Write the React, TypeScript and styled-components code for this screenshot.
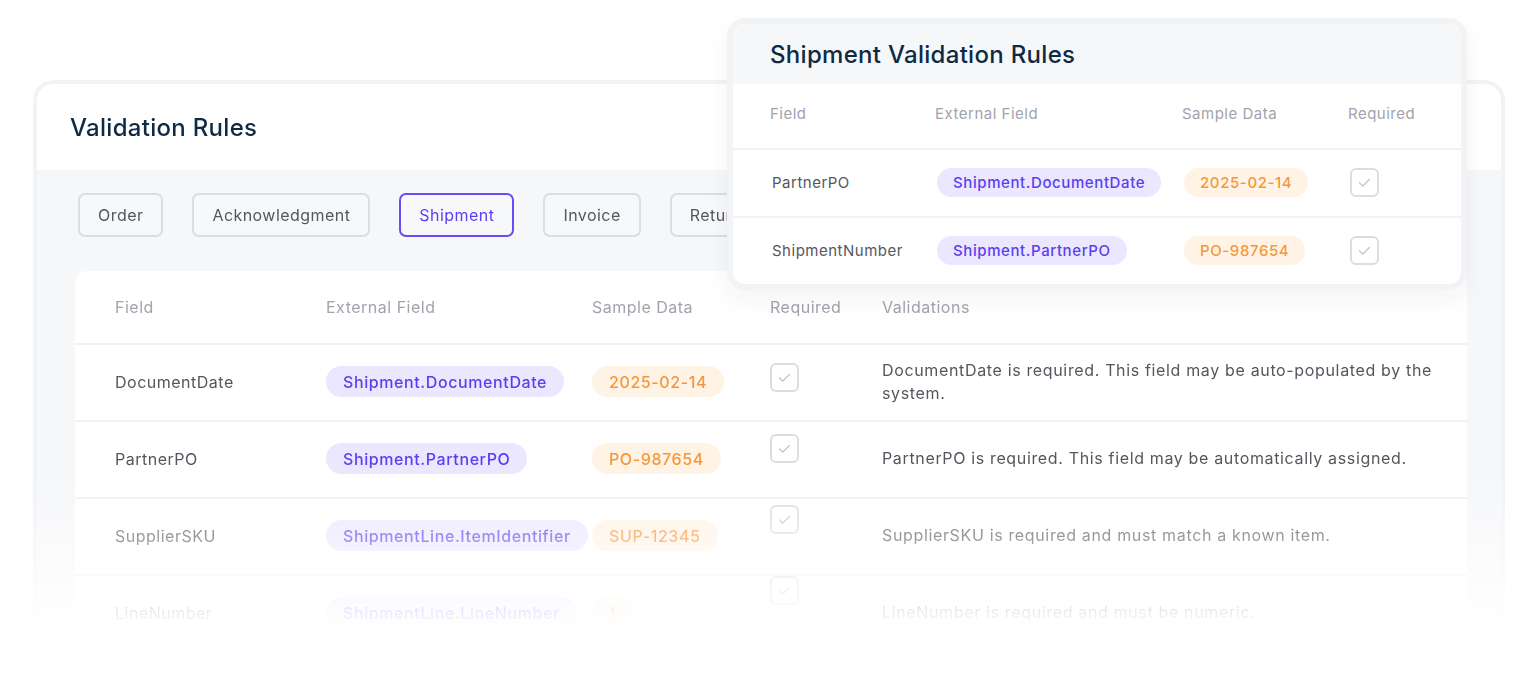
import styled, { createGlobalStyle } from "styled-components";

const GlobalStyle = createGlobalStyle`
  html, body {
    margin: 0;
    height: 100%;
    overflow: hidden;
    background: #ffffff;
  }
  body {
    font-family: Inter, "Noto Sans", sans-serif;
    color: #55565e;
    -webkit-font-smoothing: antialiased;
  }
  * { box-sizing: border-box; }
`;

const Stage = styled.div`
  position: relative;
  width: 1536px;
  height: 674px;
  padding: 80px 0 0 33px;
`;

// main panel with the tab strip and the rules table, fading out at the bottom
const Panel = styled.section`
  width: 1472px;
  border: 4px solid #f2f3f5;
  border-radius: 20px;
  overflow: hidden;
  background: #ffffff;
  -webkit-mask-image: linear-gradient(to bottom, #000 395px, transparent 550px);
  mask-image: linear-gradient(to bottom, #000 395px, transparent 550px);
`;

const PanelHeader = styled.header`
  height: 86px;
  display: flex;
  align-items: center;
  padding-left: 33px;
`;

const Title = styled.h2`
  margin: 0;
  font-size: 24px;
  font-weight: 500;
  color: #0e2a44;
  letter-spacing: 0.3px;
`;

const PanelBody = styled.div`
  background: #f6f7f9;
  padding: 23px 34px 40px 38px;
`;

const Tabs = styled.nav`
  display: flex;
  gap: 29px;
  margin-left: 3px;
`;

const Tab = styled.button<{ $active?: boolean }>`
  height: 44px;
  padding: 0 18px;
  border: 2px solid ${(p) => (p.$active ? "#6a4cf5" : "#dcdde1")};
  border-radius: 7px;
  background: #f7f8fa;
  font-family: inherit;
  font-size: 16px;
  letter-spacing: 0.45px;
  color: ${(p) => (p.$active ? "#5b3ef2" : "#55565e")};
  white-space: nowrap;
`;

const TableCard = styled.div`
  margin-top: 34px;
  background: #ffffff;
  border-radius: 12px 12px 0 0;
`;

const mainCols = "211px 266px 178px 112px 1fr";
const popCols = "165px 247px 166px 1fr";

type GridProps = { $cols: string; $h: number; $pad: number; $fs: number };

const HeadRow = styled.div<GridProps & { $raise?: number }>`
  display: grid;
  grid-template-columns: ${(p) => p.$cols};
  align-items: center;
  height: ${(p) => p.$h}px;
  padding-left: ${(p) => p.$pad}px;
  padding-bottom: ${(p) => (p.$raise ?? 0) * 2}px;
  font-size: ${(p) => p.$fs}px;
  letter-spacing: 0.5px;
  color: #a2a3ad;
`;

const Row = styled.div<GridProps>`
  display: grid;
  grid-template-columns: ${(p) => p.$cols};
  align-items: center;
  min-height: ${(p) => p.$h}px;
  padding: 11px 25px 13px ${(p) => p.$pad}px;
  border-top: 2px solid #f1f2f4;
  font-size: ${(p) => p.$fs}px;
  letter-spacing: 0.5px;
  color: #55565e;
`;

const Cell = styled.div`
  display: flex;
  align-items: center;
`;

const Chip = styled.span<{ $tone: "field" | "sample"; $fs: number }>`
  display: inline-flex;
  align-items: center;
  height: ${(p) => p.$fs * 2 - 1}px;
  padding: 0 ${(p) => p.$fs + 1}px;
  border-radius: 16px;
  font-size: ${(p) => p.$fs}px;
  font-weight: 500;
  letter-spacing: 0.6px;
  white-space: nowrap;
  background: ${(p) => (p.$tone === "field" ? "#ebe7fe" : "#fff3e6")};
  color: ${(p) => (p.$tone === "field" ? "#5b3ef2" : "#f7973a")};
`;

const Box = styled.span<{ $lift?: number }>`
  display: inline-flex;
  align-items: center;
  justify-content: center;
  width: 29px;
  height: 29px;
  border: 2px solid #dcdde2;
  border-radius: 6px;
  transform: translateY(${(p) => -(p.$lift ?? 0)}px);
`;

const Note = styled.p`
  margin: 0;
  line-height: 23px;
  letter-spacing: 0.65px;
`;

// floating card with the shipment-only rules
const Popover = styled.section`
  position: absolute;
  left: 727px;
  top: 18px;
  width: 740px;
  border: 6px solid #f2f3f5;
  border-radius: 18px;
  overflow: hidden;
  background: #ffffff;
  box-shadow: 0 10px 24px rgba(30, 30, 60, 0.05);
`;

const PopoverHeader = styled.header`
  height: 60px;
  display: flex;
  align-items: center;
  padding-left: 37px;
  background: #f6f7f9;
`;

const Check = () => (
  <svg width="17" height="17" viewBox="0 0 24 24" fill="none">
    <path d="M5 12.5l4.5 4.5L19 7.5" stroke="#b9bac1" strokeWidth="1.6" strokeLinecap="round" strokeLinejoin="round" />
  </svg>
);

const tabs = ["Order", "Acknowledgment", "Shipment", "Invoice", "Return"];

const rules = [
  {
    field: "DocumentDate",
    external: "Shipment.DocumentDate",
    sample: "2025-02-14",
    note: "DocumentDate is required. This field may be auto-populated by the system.",
  },
  {
    field: "PartnerPO",
    external: "Shipment.PartnerPO",
    sample: "PO-987654",
    note: "PartnerPO is required. This field may be automatically assigned.",
  },
  {
    field: "SupplierSKU",
    external: "ShipmentLine.ItemIdentifier",
    sample: "SUP-12345",
    note: "SupplierSKU is required and must match a known item.",
  },
  {
    field: "LineNumber",
    external: "ShipmentLine.LineNumber",
    sample: "1",
    note: "LineNumber is required and must be numeric.",
  },
];

const shipmentRules = [
  { field: "PartnerPO", external: "Shipment.DocumentDate", sample: "2025-02-14" },
  { field: "ShipmentNumber", external: "Shipment.PartnerPO", sample: "PO-987654" },
];

export default function App() {
  return (
    <>
      <GlobalStyle />
      <Stage>
        <Panel>
          <PanelHeader>
            <Title>Validation Rules</Title>
          </PanelHeader>
          <PanelBody>
            <Tabs>
              {tabs.map((t) => (
                <Tab key={t} $active={t === "Shipment"}>
                  {t}
                </Tab>
              ))}
            </Tabs>
            <TableCard>
              <HeadRow $cols={mainCols} $h={72} $pad={40} $fs={16}>
                <span>Field</span>
                <span>External Field</span>
                <span>Sample Data</span>
                <span>Required</span>
                <span>Validations</span>
              </HeadRow>
              {rules.map((r, i) => (
                <Row key={r.field} $cols={mainCols} $h={77} $pad={40} $fs={16}>
                  <Cell>{r.field}</Cell>
                  <Cell>
                    <Chip $tone="field" $fs={16}>{r.external}</Chip>
                  </Cell>
                  <Cell>
                    <Chip $tone="sample" $fs={16}>{r.sample}</Chip>
                  </Cell>
                  <Cell>
                    <Box $lift={4 + i * 6}>
                      <Check />
                    </Box>
                  </Cell>
                  <Note>{r.note}</Note>
                </Row>
              ))}
            </TableCard>
          </PanelBody>
        </Panel>

        <Popover>
          <PopoverHeader>
            <Title>Shipment Validation Rules</Title>
          </PopoverHeader>
          <HeadRow $cols={popCols} $h={64} $pad={37} $fs={15} $raise={3}>
            <span>Field</span>
            <span>External Field</span>
            <span>Sample Data</span>
            <span>Required</span>
          </HeadRow>
          {shipmentRules.map((r) => (
            <Row key={r.field} $cols={popCols} $h={68} $pad={39} $fs={15}>
              <Cell>{r.field}</Cell>
              <Cell>
                <Chip $tone="field" $fs={15}>{r.external}</Chip>
              </Cell>
              <Cell>
                <Chip $tone="sample" $fs={15}>{r.sample}</Chip>
              </Cell>
              <Cell>
                <Box>
                  <Check />
                </Box>
              </Cell>
            </Row>
          ))}
        </Popover>
      </Stage>
    </>
  );
}
